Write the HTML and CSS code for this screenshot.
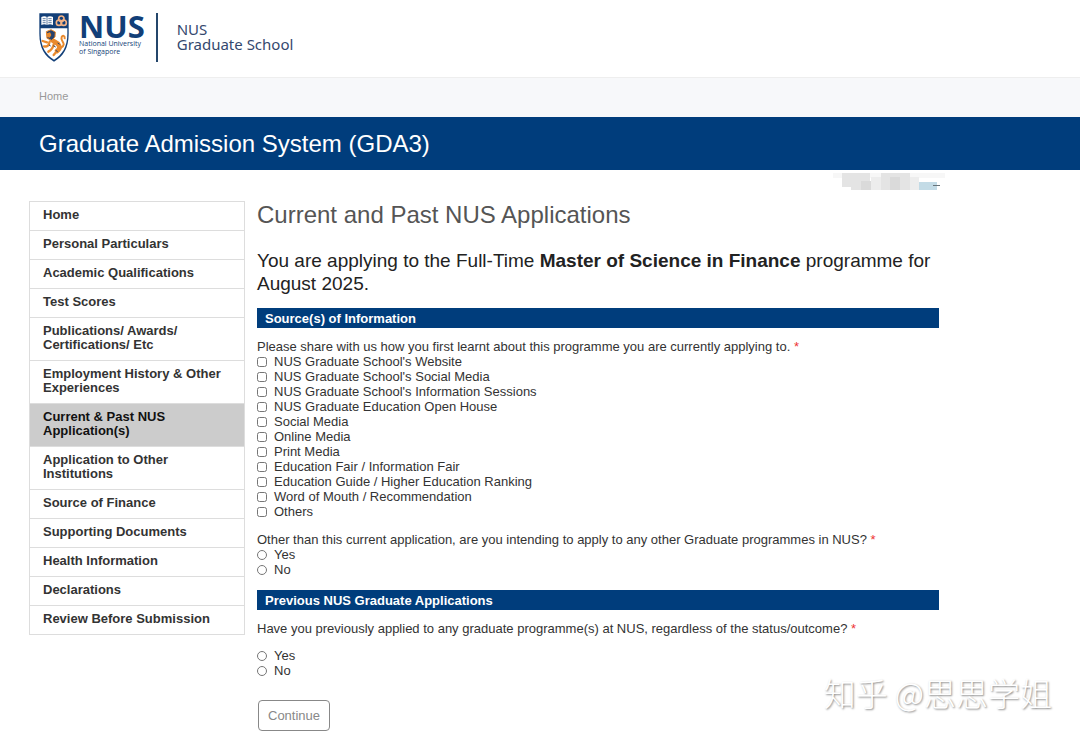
FILE: index.html
```html
<!DOCTYPE html>
<html lang="en">
<head>
    <meta charset="UTF-8">
    <meta name="viewport" content="width=device-width, initial-scale=1.0">
    <title>Graduate Admission System (GDA3)</title>
    <link rel="stylesheet" href="styles.css">
</head>
<body>
    <header class="header">
        <a href="#" class="logo">
            <svg class="crest" viewBox="0 0 90 147" aria-hidden="true">
                <path d="M1 1H89V62C89 106 72 130 45 146C18 130 1 106 1 62Z" fill="#123f78"/>
                <path d="M5 46H85V62C85 102 69 125 45 140C21 125 5 102 5 62Z" fill="#fff"/>
                <!-- book -->
                <path d="M7 12Q16 8 24 12Q33 8 42 12V36Q33 32 24 36Q16 32 7 36Z" fill="#fff"/>
                <path d="M24 12V36M11 17H20M11 23H20M11 29H20M28 17H38M28 23H38M28 29H38" stroke="#123f78" stroke-width="2" fill="none"/>
                <!-- rings -->
                <g fill="none" stroke="#f3b183" stroke-width="5">
                    <circle cx="67" cy="17" r="8"/>
                    <circle cx="60" cy="29" r="8"/>
                    <circle cx="74" cy="29" r="8"/>
                </g>
                <!-- lion -->
                <g fill="none" stroke="#e98a2e" stroke-linecap="round" stroke-linejoin="round">
                    <path d="M36 76C42 90 54 84 60 98C64 106 60 110 54 114" stroke-width="14"/>
                    <path d="M32 86C30 98 24 102 15 100M44 94C42 106 36 112 28 116M54 114L44 126M24 88L11 84" stroke-width="7"/>
                    <path d="M66 104C86 92 62 84 68 72C71 66 78 68 77 76" stroke-width="6"/>
                </g>
                <path d="M22 56L36 50L49 57L48 72L38 82L24 76Z" fill="#28426c" stroke="#e98a2e" stroke-width="3"/>
                <path d="M24 61L33 58L37 66L32 74L24 72Z" fill="#e98a2e"/>
                <path d="M43 98L50 102M56 90L62 94M30 96L35 99M50 112L56 116" stroke="#28426c" stroke-width="3"/>
            </svg>
            <span class="nus">
                <span class="nus-name">NUS</span>
                <span class="nus-full">National University<br>of Singapore</span>
            </span>
            <span class="school">NUS<br>Graduate School</span>
        </a>
    </header>

    <nav class="breadcrumb">
        <a href="#">Home</a>
    </nav>

    <div class="banner">
        <h1>Graduate Admission System (GDA3)</h1>
    </div>

    <div class="userbar">
        <svg class="user" viewBox="0 0 112 17" aria-hidden="true">
            <path fill="#f7f7f7" d="M0 0h112v5H0z"/>
            <path fill="#e4e4e4" d="M9 0h28v17H18v-3H9zM48 0h29v17H48z"/>
            <path fill="#dadada" d="M28 8h10v9H28zM57 4h10v13H57z"/>
            <path fill="#ededed" d="M38 4h10v13H38zM77 4h9v13h-9z"/>
            <path fill="#c3dbe6" d="M86 9h18v8H86z"/>
            <path fill="#68747a" d="M100 12h7v1h-7z"/>
        </svg>
    </div>

    <div class="page">
        <nav class="sidebar">
            <a href="#">Home</a>
            <a href="#">Personal Particulars</a>
            <a href="#">Academic Qualifications</a>
            <a href="#">Test Scores</a>
            <a href="#">Publications/ Awards/<br>Certifications/ Etc</a>
            <a href="#">Employment History &amp; Other Experiences</a>
            <a href="#" class="active">Current &amp; Past NUS<br>Application(s)</a>
            <a href="#">Application to Other<br>Institutions</a>
            <a href="#">Source of Finance</a>
            <a href="#">Supporting Documents</a>
            <a href="#">Health Information</a>
            <a href="#">Declarations</a>
            <a href="#">Review Before Submission</a>
        </nav>

        <main class="content">
            <h2>Current and Past NUS Applications</h2>
            <p class="intro">You are applying to the Full-Time <b>Master of Science in Finance</b> programme for August 2025.</p>

            <form>
                <h3>Source(s) of Information</h3>
                <fieldset>
                    <legend>Please share with us how you first learnt about this programme you are currently applying to. <span class="req">*</span></legend>
                    <label><input type="checkbox" name="source">NUS Graduate School's Website</label>
                    <label><input type="checkbox" name="source">NUS Graduate School's Social Media</label>
                    <label><input type="checkbox" name="source">NUS Graduate School's Information Sessions</label>
                    <label><input type="checkbox" name="source">NUS Graduate Education Open House</label>
                    <label><input type="checkbox" name="source">Social Media</label>
                    <label><input type="checkbox" name="source">Online Media</label>
                    <label><input type="checkbox" name="source">Print Media</label>
                    <label><input type="checkbox" name="source">Education Fair / Information Fair</label>
                    <label><input type="checkbox" name="source">Education Guide / Higher Education Ranking</label>
                    <label><input type="checkbox" name="source">Word of Mouth / Recommendation</label>
                    <label><input type="checkbox" name="source">Others</label>
                </fieldset>
                <fieldset>
                    <legend>Other than this current application, are you intending to apply to any other Graduate programmes in NUS? <span class="req">*</span></legend>
                    <label><input type="radio" name="other">Yes</label>
                    <label><input type="radio" name="other">No</label>
                </fieldset>

                <h3>Previous NUS Graduate Applications</h3>
                <fieldset class="spaced">
                    <legend>Have you previously applied to any graduate programme(s) at NUS, regardless of the status/outcome? <span class="req">*</span></legend>
                    <label><input type="radio" name="previous">Yes</label>
                    <label><input type="radio" name="previous">No</label>
                </fieldset>

                <button type="button" class="btn">Continue</button>
            </form>
        </main>
    </div>

    <div class="watermark">知乎 @思思学姐</div>
</body>
</html>
```
FILE: styles.css
```css
* {
    box-sizing: border-box;
}

body {
    margin: 0;
    font-family: "Liberation Sans", Arial, sans-serif;
    font-size: 13px;
    line-height: 15px;
    color: #333;
    background-color: #fff;
}

a {
    color: inherit;
    text-decoration: none;
}

.header {
    padding: 13px 39px 15px;
    border-bottom: 1px solid #eee;
}

.logo {
    display: flex;
    color: #123f78;
}

.crest {
    width: 30px;
    height: 49px;
}

.nus {
    padding: 0 11px 0 10px;
    border-right: 2px solid #24466b;
}

.nus-name {
    display: block;
    font-family: "Open Sans", sans-serif;
    font-size: 31px;
    font-weight: 700;
    line-height: 27px;
}

.nus-full {
    display: block;
    font-family: "Open Sans", sans-serif;
    font-size: 7px;
    font-weight: 500;
    line-height: 8px;
}

.school {
    padding: 9px 0 0 19px;
    font-family: "Noto Sans", sans-serif;
    font-size: 15px;
    line-height: 15px;
    color: #34486e;
}

.breadcrumb {
    padding: 11px 39px 13px;
    background-color: #f7f8fa;
    font-size: 11px;
    color: #999;
}

.banner {
    padding: 13px 39px;
    background-color: #003d7c;
    color: #fff;
}

.banner h1 {
    margin: 0;
    font-size: 24px;
    font-weight: 400;
    line-height: 27px;
}

.userbar {
    display: flex;
    justify-content: flex-end;
    height: 31px;
    padding: 3px 135px 0 0;
}

.user {
    width: 112px;
    height: 17px;
}

.page {
    display: flex;
    gap: 12px;
    padding: 0 141px 7px 29px;
}

.sidebar {
    flex: 0 0 216px;
    align-self: flex-start;
    border: 1px solid #ddd;
    border-bottom: 0;
    font-weight: 700;
    line-height: 14px;
}

.sidebar a {
    display: block;
    padding: 6px 13px 8px;
    border-bottom: 1px solid #ddd;
}

.sidebar .active {
    background-color: #ccc;
    color: #111;
}

.content {
    flex: 1;
}

h2 {
    margin: 0 0 20px;
    font-size: 24px;
    font-weight: 400;
    line-height: 28px;
    color: #555;
}

.intro {
    margin: 0 0 13px;
    font-size: 19px;
    line-height: 23px;
    color: #222;
}

h3 {
    margin: 0 0 11px;
    padding: 3px 8px 2px;
    background-color: #003d7c;
    font-size: 13px;
    line-height: 15px;
    color: #fff;
}

fieldset {
    margin: 0 0 13px;
    padding: 0;
    border: 0;
}

legend {
    padding: 0;
}

.req {
    color: #e33;
}

label {
    display: flex;
    align-items: center;
}

input {
    width: 10px;
    height: 10px;
    margin: 1px 7px 0 0;
}

.spaced {
    margin-bottom: 22px;
}

.spaced legend {
    margin-bottom: 12px;
}

.btn {
    margin-left: 1px;
    padding: 7px 9px;
    border: 1px solid #888;
    border-radius: 4px;
    background-color: #fff;
    font-family: inherit;
    font-size: 13px;
    line-height: 15px;
    color: #888;
}

.watermark {
    position: absolute;
    right: 28px;
    bottom: 26px;
    font-family: "Noto Sans CJK SC", sans-serif;
    font-size: 32px;
    font-weight: 300;
    line-height: 40px;
    color: #fff;
    text-shadow: 1px 1px 2px #888;
}
```
